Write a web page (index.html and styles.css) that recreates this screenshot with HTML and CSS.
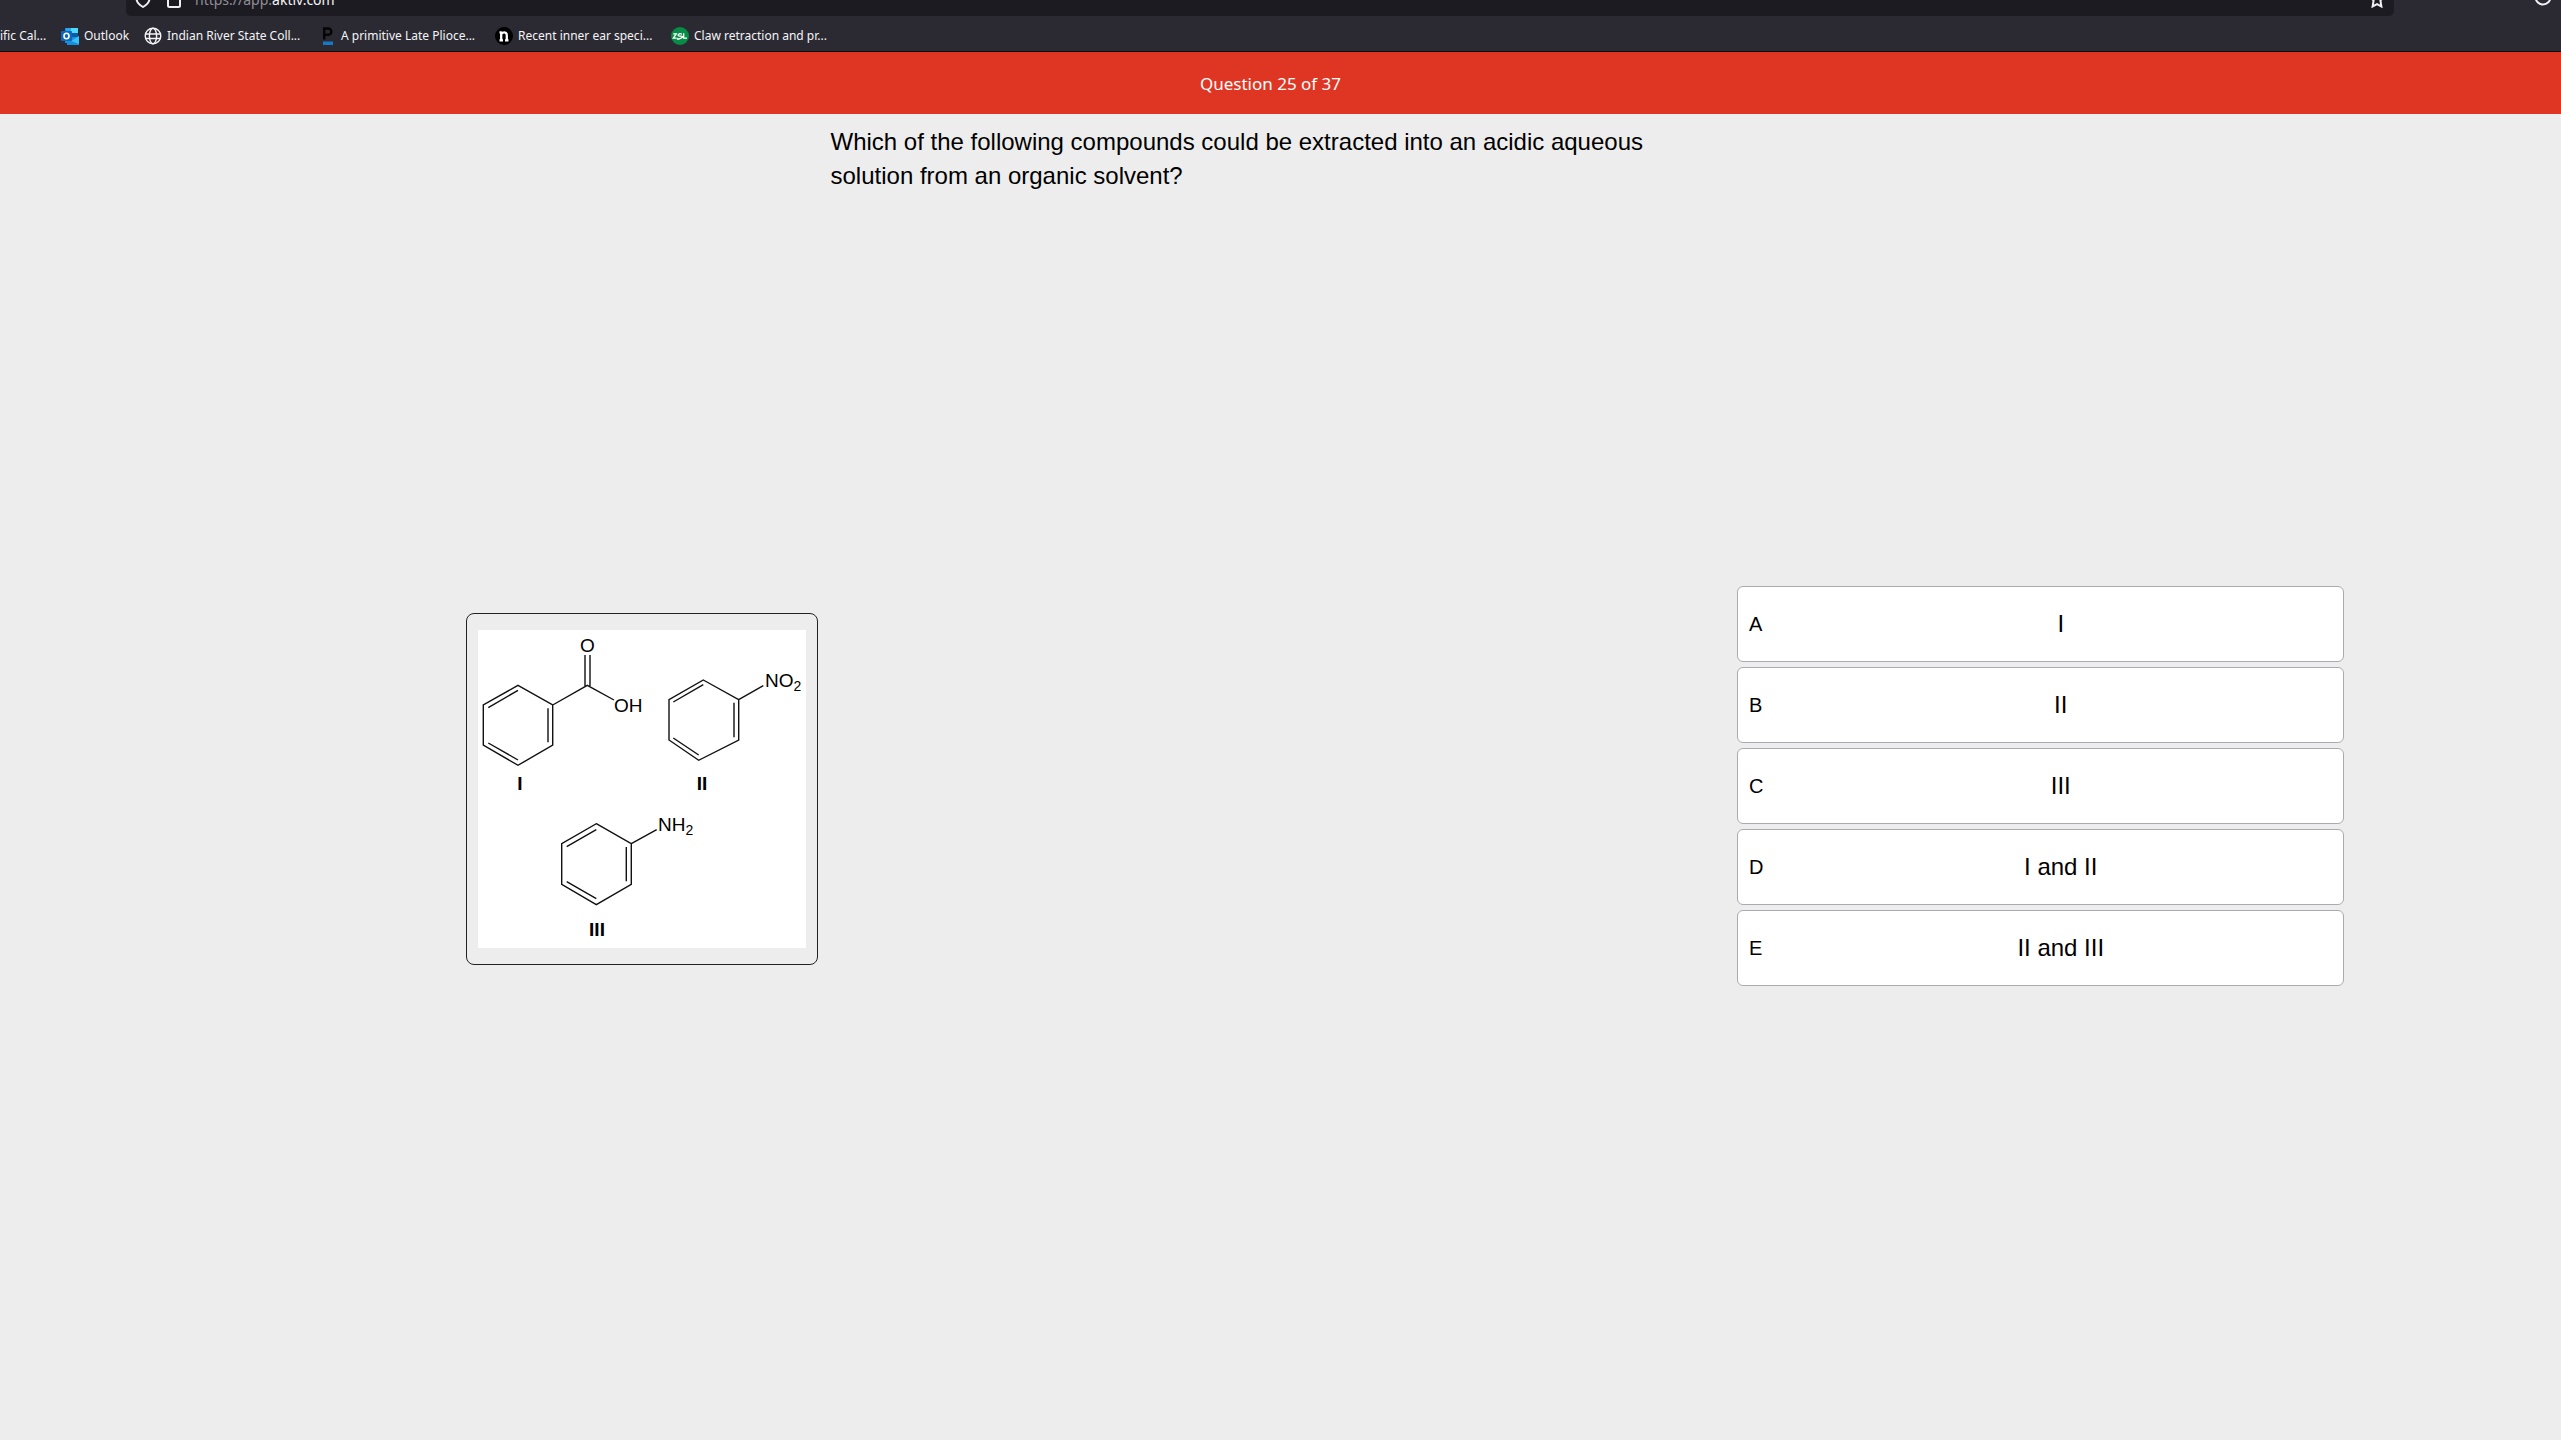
FILE: index.html
```html
<!DOCTYPE html>
<html lang="en">
<head>
<meta charset="utf-8">
<title>Question 25 of 37</title>
<link rel="stylesheet" href="styles.css">
</head>
<body>
<div class="browser">
  <div class="toolbar">
    <div class="address">
      <svg class="icon" viewBox="0 0 18 18"><path d="M9 1.5 15.5 4v4.5c0 4-3 6.500-6.500 8.500C5.500 15 2.500 12.500 2.500 8.500V4z"/></svg>
      <svg class="icon lock" viewBox="0 0 18 18"><path d="M5 8V4.500a4 4 0 0 1 8 0V8"/><rect x="3" y="8" width="12" height="9" rx="1.500"/></svg>
      <span class="url">https://app.<b>aktiv.com</b></span>
      <svg class="icon star" viewBox="0 0 18 18"><path d="m9 2 2.100 4.500 4.900.6-3.600 3.300 1 6.100L9 14.200l-4.400 2.300 1-6.100L2 7.100l4.900-.6z"/></svg>
    </div>
    <svg class="icon account" viewBox="0 0 18 18"><circle cx="9" cy="9" r="7.500"/><path d="M9 6v6"/></svg>
  </div>
  <nav class="bookmarks">
    <a href="#" class="bookmark">ific Cal...</a>
    <a href="#" class="bookmark">
      <svg class="favicon" viewBox="0 0 18 18"><path fill="#1490df" d="M4 1h13v15H4z"/><path fill="#50d9ff" d="M10 1h7v5h-7z"/><path fill="#28a8ea" d="M5 1h5v5H5z"/><path fill="#0a5ba8" d="M10 6h7v4h-7z"/><path fill="#1490df" d="M6 11h12v7H6z"/><path fill="#38bff5" d="m18 9-8 5 8 3z"/><rect fill="#0f66bd" y="4" width="11" height="10" rx="1"/><ellipse cx="5.500" cy="9" rx="2.500" ry="2.800" fill="none" stroke="#fff" stroke-width="1.600"/></svg>
      Outlook</a>
    <a href="#" class="bookmark">
      <svg class="favicon globe" viewBox="0 0 18 18"><circle cx="9" cy="9" r="7.800"/><ellipse cx="9" cy="9" rx="3.600" ry="7.800"/><path d="M1.500 7h15M1.500 11.500h15"/></svg>
      Indian River State Coll...</a>
    <a href="#" class="bookmark">
      <svg class="favicon" viewBox="0 0 18 18"><path fill="none" stroke="#050506" stroke-width="2.400" d="M6.200 12.500V1.500h4a3 3 0 0 1 0 6.300H6.200"/><path fill="#1878c8" d="M5 14.500h10V18H5z"/></svg>
      A primitive Late Plioce...</a>
    <a href="#" class="bookmark">
      <svg class="favicon" viewBox="0 0 18 18"><circle cx="9" cy="9" r="9"/><path fill="none" stroke="#fff" stroke-width="2.300" d="M6.200 13.500v-9M6.200 7q2.500-2.500 4.700-1 .9.600.9 2.500v5M4.500 5.300h2M4.500 13.300h3.500M10 13.300h3.500"/></svg>
      Recent inner ear speci...</a>
    <a href="#" class="bookmark">
      <svg class="favicon" viewBox="0 0 18 18"><circle cx="9" cy="9" r="9" fill="#068c45"/><path fill="none" stroke="#fff" stroke-width="1.300" d="M2.200 6.800H5.300L2.300 11.200H5.500M11 7.200Q8.800 6 7.500 7.500T10 9.200 9.500 11.300 6.800 11M12.700 6.200v5h3.300"/></svg>
      Claw retraction and pr...</a>
  </nav>
</div>
<header class="progress">Question 25 of 37</header>
<main class="quiz">
  <h1 class="question">Which of the following compounds could be extracted into an acidic aqueous solution from an organic solvent?</h1>
  <div class="workspace">
    <figure class="figure">
      <svg class="compounds" viewBox="0 0 328 318" role="img" aria-label="Compounds I, II and III">
        <g class="bonds">
          <path d="M40 55.300 74.700 75v40L40 135.300 5.300 115V75zM10.300 77.700 40 60.300M70 78.300v34M10.300 113 40 130M74.700 75l34.600-19.700L136 70M107 25v31M112 25v31"/>
          <path d="M225.300 50 260.700 69.700V110l-40 20.300L191 110V69.700zM195.300 72l30-17.300M256 72.700v34.600M195.300 108l25.400 17M260.700 69.700l24.600-14"/>
          <path d="M118.300 193.700l35 20v40.600l-35 20.400-34.600-20.400v-40.600zM88.700 216.700l29.600-17M148.300 217v34.300M88.700 251.700l29.600 17M153.300 213.700l25.400-14"/>
        </g>
        <text class="atom" x="102" y="22">O</text>
        <text class="atom" x="136" y="82">OH</text>
        <text class="atom" x="287" y="57">NO<tspan class="sub" dy="4">2</tspan></text>
        <text class="atom" x="180" y="201">NH<tspan class="sub" dy="4">2</tspan></text>
        <text class="numeral" x="42" y="160">I</text>
        <text class="numeral" x="224" y="160">II</text>
        <text class="numeral" x="119" y="306">III</text>
      </svg>
    </figure>
    <div class="answers">
      <button class="answer" type="button"><span class="letter">A</span><span class="choice">I</span></button>
      <button class="answer" type="button"><span class="letter">B</span><span class="choice">II</span></button>
      <button class="answer" type="button"><span class="letter">C</span><span class="choice">III</span></button>
      <button class="answer" type="button"><span class="letter">D</span><span class="choice">I and II</span></button>
      <button class="answer" type="button"><span class="letter">E</span><span class="choice">II and III</span></button>
    </div>
  </div>
</main>
</body>
</html>
```
FILE: styles.css
```css
* {
  box-sizing: border-box;
}

body {
  margin: 0;
  min-height: 100vh;
  display: flex;
  flex-direction: column;
  background: #ededed;
  color: #000;
  font-family: "Liberation Sans", Arial, sans-serif;
}

.browser {
  background: #2b2a33;
  border-bottom: 1px solid #0c0c0d;
  color: #f4f4f6;
  font-family: "Noto Sans", sans-serif;
  font-size: 12px;
}

/* Only the lower edge of the toolbar is in view */
.toolbar {
  display: flex;
  align-items: flex-end;
  height: 16px;
  padding: 0 9px 0 126px;
  overflow: hidden;
}

.address {
  flex: 1;
  display: flex;
  align-items: center;
  height: 36px;
  margin-right: 140px;
  padding: 2px 8px 0;
  border-radius: 5px;
  background: #1c1b22;
}

.icon {
  flex: none;
  width: 18px;
  height: 18px;
  fill: none;
  stroke: #f0f0f4;
  stroke-width: 2;
}

.lock {
  margin: 0 12px 0 13px;
}

.star {
  margin-left: auto;
}

.account {
  margin-bottom: 10px;
}

.url {
  color: #8f8f96;
  font-size: 14px;
}

.url b {
  color: #f4f4f6;
  font-weight: 400;
}

.bookmarks {
  display: grid;
  grid-template-columns: 61px 83px 174px 177px 176px auto;
  height: 35px;
  padding-top: 4px;
}

.bookmark {
  display: flex;
  align-items: center;
  gap: 5px;
  color: inherit;
  text-decoration: none;
  white-space: nowrap;
}

.favicon {
  width: 18px;
  height: 18px;
}

.globe {
  fill: none;
  stroke: #f4f4f6;
  stroke-width: 1.400;
}

.progress {
  height: 62px;
  padding: 0 20px 0 0;
  background: #df3624;
  color: #fff;
  font-family: "Noto Sans", sans-serif;
  font-size: 17px;
  line-height: 64px;
  text-align: center;
}

.quiz {
  flex: 1;
  display: flex;
  flex-direction: column;
}

.question {
  width: 100%;
  max-width: 900px;
  margin: 0 auto;
  padding: 11px 0 12px;
  font-size: 24px;
  font-weight: 400;
  line-height: 34px;
}

.workspace {
  flex: 1;
  display: grid;
  grid-template-columns: 1fr 1fr;
  align-items: center;
  padding: 0 0 68px 2px;
}

.figure {
  justify-self: center;
  margin: 0;
  padding: 16px 11px;
  border: 1px solid #222;
  border-radius: 8px;
}

.compounds {
  display: block;
  width: 328px;
  height: 318px;
  background: #fff;
}

.bonds {
  fill: none;
  stroke: #111;
  stroke-width: 1.400;
}

.atom {
  font-size: 19px;
}

.sub {
  font-size: 14px;
}

.numeral {
  font-size: 19px;
  font-weight: 700;
  text-anchor: middle;
}

.answers {
  display: flex;
  flex-direction: column;
  gap: 5px;
  padding: 0 17% 5px 35.600%;
}

.answer {
  display: flex;
  align-items: center;
  height: 76px;
  padding: 0 0 0 11px;
  border: 1px solid #a9abb0;
  border-radius: 6px;
  background: #fff;
  color: #000;
  font-family: inherit;
  font-size: 24px;
  text-align: center;
}

.letter {
  width: 30px;
  font-size: 20px;
  text-align: left;
}

.choice {
  flex: 1;
}
```
